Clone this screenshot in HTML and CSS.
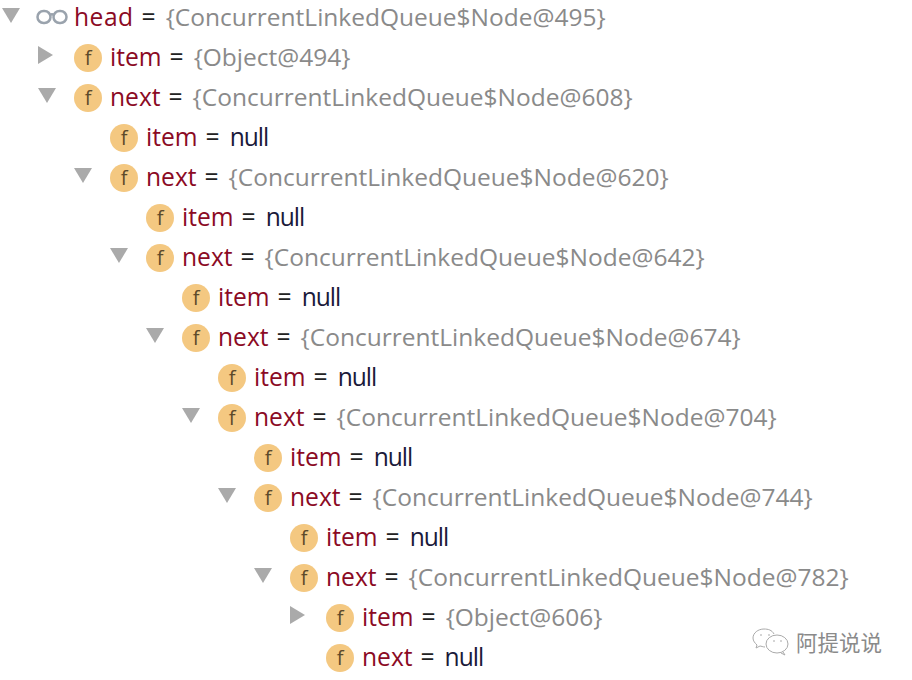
FILE: index.html
```html
<!DOCTYPE html>
<html lang="zh">
<head>
  <meta charset="UTF-8" />
  <title>ConcurrentLinkedQueue</title>
  <link rel="stylesheet" href="styles.css">
</head>
<body>
  <svg class="defs" width="0" height="0">
    <symbol id="open" viewBox="0 0 18 15"><path d="M0 0H18L9 15Z"/></symbol>
    <symbol id="closed" viewBox="0 0 15 18"><path d="M0 0L15 9L0 18Z"/></symbol>
  </svg>
  <ul class="tree root">
    <li>
      <div class="row">
        <span class="arrow"><svg class="open"><use href="#open"/></svg></span>
        <span class="watch"><svg width="32" height="16" viewBox="0 0 32 16"><rect x="1.500" y="2" width="13" height="12" rx="6"/><rect x="17.500" y="2" width="13" height="12" rx="6"/><path d="M14 6q2-1.500 4 0"/></svg></span>
        <span class="name head">head</span> <span class="eq">=</span> <span class="ref">{ConcurrentLinkedQueue$Node@495}</span>
      </div>
      <ul class="tree">
        <li><div class="row"><span class="arrow"><svg class="closed"><use href="#closed"/></svg></span><span class="field">f</span><span class="name">item</span> <span class="eq">=</span> <span class="ref">{Object@494}</span></div></li>
        <li>
          <div class="row"><span class="arrow"><svg class="open"><use href="#open"/></svg></span><span class="field">f</span><span class="name">next</span> <span class="eq">=</span> <span class="ref">{ConcurrentLinkedQueue$Node@608}</span></div>
          <ul class="tree">
            <li><div class="row"><span class="arrow"></span><span class="field">f</span><span class="name">item</span> <span class="eq">=</span> <span class="nil">null</span></div></li>
            <li>
              <div class="row"><span class="arrow"><svg class="open"><use href="#open"/></svg></span><span class="field">f</span><span class="name">next</span> <span class="eq">=</span> <span class="ref">{ConcurrentLinkedQueue$Node@620}</span></div>
              <ul class="tree">
                <li><div class="row"><span class="arrow"></span><span class="field">f</span><span class="name">item</span> <span class="eq">=</span> <span class="nil">null</span></div></li>
                <li>
                  <div class="row"><span class="arrow"><svg class="open"><use href="#open"/></svg></span><span class="field">f</span><span class="name">next</span> <span class="eq">=</span> <span class="ref">{ConcurrentLinkedQueue$Node@642}</span></div>
                  <ul class="tree">
                    <li><div class="row"><span class="arrow"></span><span class="field">f</span><span class="name">item</span> <span class="eq">=</span> <span class="nil">null</span></div></li>
                    <li>
                      <div class="row"><span class="arrow"><svg class="open"><use href="#open"/></svg></span><span class="field">f</span><span class="name">next</span> <span class="eq">=</span> <span class="ref">{ConcurrentLinkedQueue$Node@674}</span></div>
                      <ul class="tree">
                        <li><div class="row"><span class="arrow"></span><span class="field">f</span><span class="name">item</span> <span class="eq">=</span> <span class="nil">null</span></div></li>
                        <li>
                          <div class="row"><span class="arrow"><svg class="open"><use href="#open"/></svg></span><span class="field">f</span><span class="name">next</span> <span class="eq">=</span> <span class="ref">{ConcurrentLinkedQueue$Node@704}</span></div>
                          <ul class="tree">
                            <li><div class="row"><span class="arrow"></span><span class="field">f</span><span class="name">item</span> <span class="eq">=</span> <span class="nil">null</span></div></li>
                            <li>
                              <div class="row"><span class="arrow"><svg class="open"><use href="#open"/></svg></span><span class="field">f</span><span class="name">next</span> <span class="eq">=</span> <span class="ref">{ConcurrentLinkedQueue$Node@744}</span></div>
                              <ul class="tree">
                                <li><div class="row"><span class="arrow"></span><span class="field">f</span><span class="name">item</span> <span class="eq">=</span> <span class="nil">null</span></div></li>
                                <li>
                                  <div class="row"><span class="arrow"><svg class="open"><use href="#open"/></svg></span><span class="field">f</span><span class="name">next</span> <span class="eq">=</span> <span class="ref">{ConcurrentLinkedQueue$Node@782}</span></div>
                                  <ul class="tree">
                                    <li><div class="row"><span class="arrow"><svg class="closed"><use href="#closed"/></svg></span><span class="field">f</span><span class="name">item</span> <span class="eq">=</span> <span class="ref">{Object@606}</span></div></li>
                                    <li><div class="row"><span class="arrow"></span><span class="field">f</span><span class="name">next</span> <span class="eq">=</span> <span class="nil">null</span></div></li>
                                  </ul>
                                </li>
                              </ul>
                            </li>
                          </ul>
                        </li>
                      </ul>
                    </li>
                  </ul>
                </li>
              </ul>
            </li>
          </ul>
        </li>
      </ul>
    </li>
  </ul>
  <div class="mark">
    <svg width="38" height="28" viewBox="0 0 38 28">
      <path d="M22 6C20 2 16 1 12 1C6 1 1 5 1 10C1 13 3 15 5 17L4 20L8 18C9 18 11 19 13 19"/>
      <ellipse cx="25" cy="16" rx="11" ry="9"/>
      <path d="M31 24L33 27L29 25"/>
      <path class="dots" d="M8 7h2M16 7h2M21 13h2M28 13h2"/>
    </svg>
    <span>阿提说说</span>
  </div>
</body>
</html>
```

FILE: styles.css
```css
* {margin: 0; padding: 0; box-sizing: border-box;}
body {
  background: #fff;
  font-family: "Open Sans", sans-serif;
  font-size: 24.6px;
  overflow: hidden;
  height: 680px;
  position: relative;
}
.defs {
  position: absolute;
}
.tree {
  list-style: none;
  padding-left: 36px;
}
.root {
  padding-left: 0;
  margin-top: -3px;
}
.row {
  display: flex;
  align-items: center;
  height: 40px;
  white-space: pre;
}
.arrow {
  width: 36px;
  flex: none;
  display: flex;
  padding-left: 2px;
  margin-top: -4px;
}
.arrow svg {
  fill: #aaaaaa;
}
.arrow .open {
  width: 18px;
  height: 15px;
}
.arrow .closed {
  width: 15px;
  height: 18px;
}
.watch {
  width: 38px;
  flex: none;
  display: flex;
}
.watch svg {
  fill: none;
  stroke: #9aa3ad;
  stroke-width: 2.5;
}
.field {
  width: 28px;
  height: 28px;
  flex: none;
  margin: 2px 8px 0 2px;
  border-radius: 50%;
  background: #f4c881;
  color: #5c4a2a;
  font-size: 20px;
  line-height: 27px;
  text-align: center;
}
.name,
.eq,
.ref,
.nil {
  position: relative;
  top: -1px;
}
.name {
  color: #8b0a24;
}
.head {
  letter-spacing: 0.5px;
}
.eq {
  color: #222;
  margin: 0 10px 0 8px;
}
.ref {
  color: #8a8a8a;
  font-size: 24.5px;
}
.nil {
  color: #1a1a3a;
  letter-spacing: -1px;
}
.mark {
  position: absolute;
  left: 752px;
  top: 626px;
  display: flex;
  align-items: center;
  gap: 6px;
  color: #8a8a8a;
  font-family: "Noto Sans CJK SC", sans-serif;
  font-size: 21.500px;
}
.mark svg {
  fill: none;
  stroke: #aaa;
  stroke-width: 1;
}
```
